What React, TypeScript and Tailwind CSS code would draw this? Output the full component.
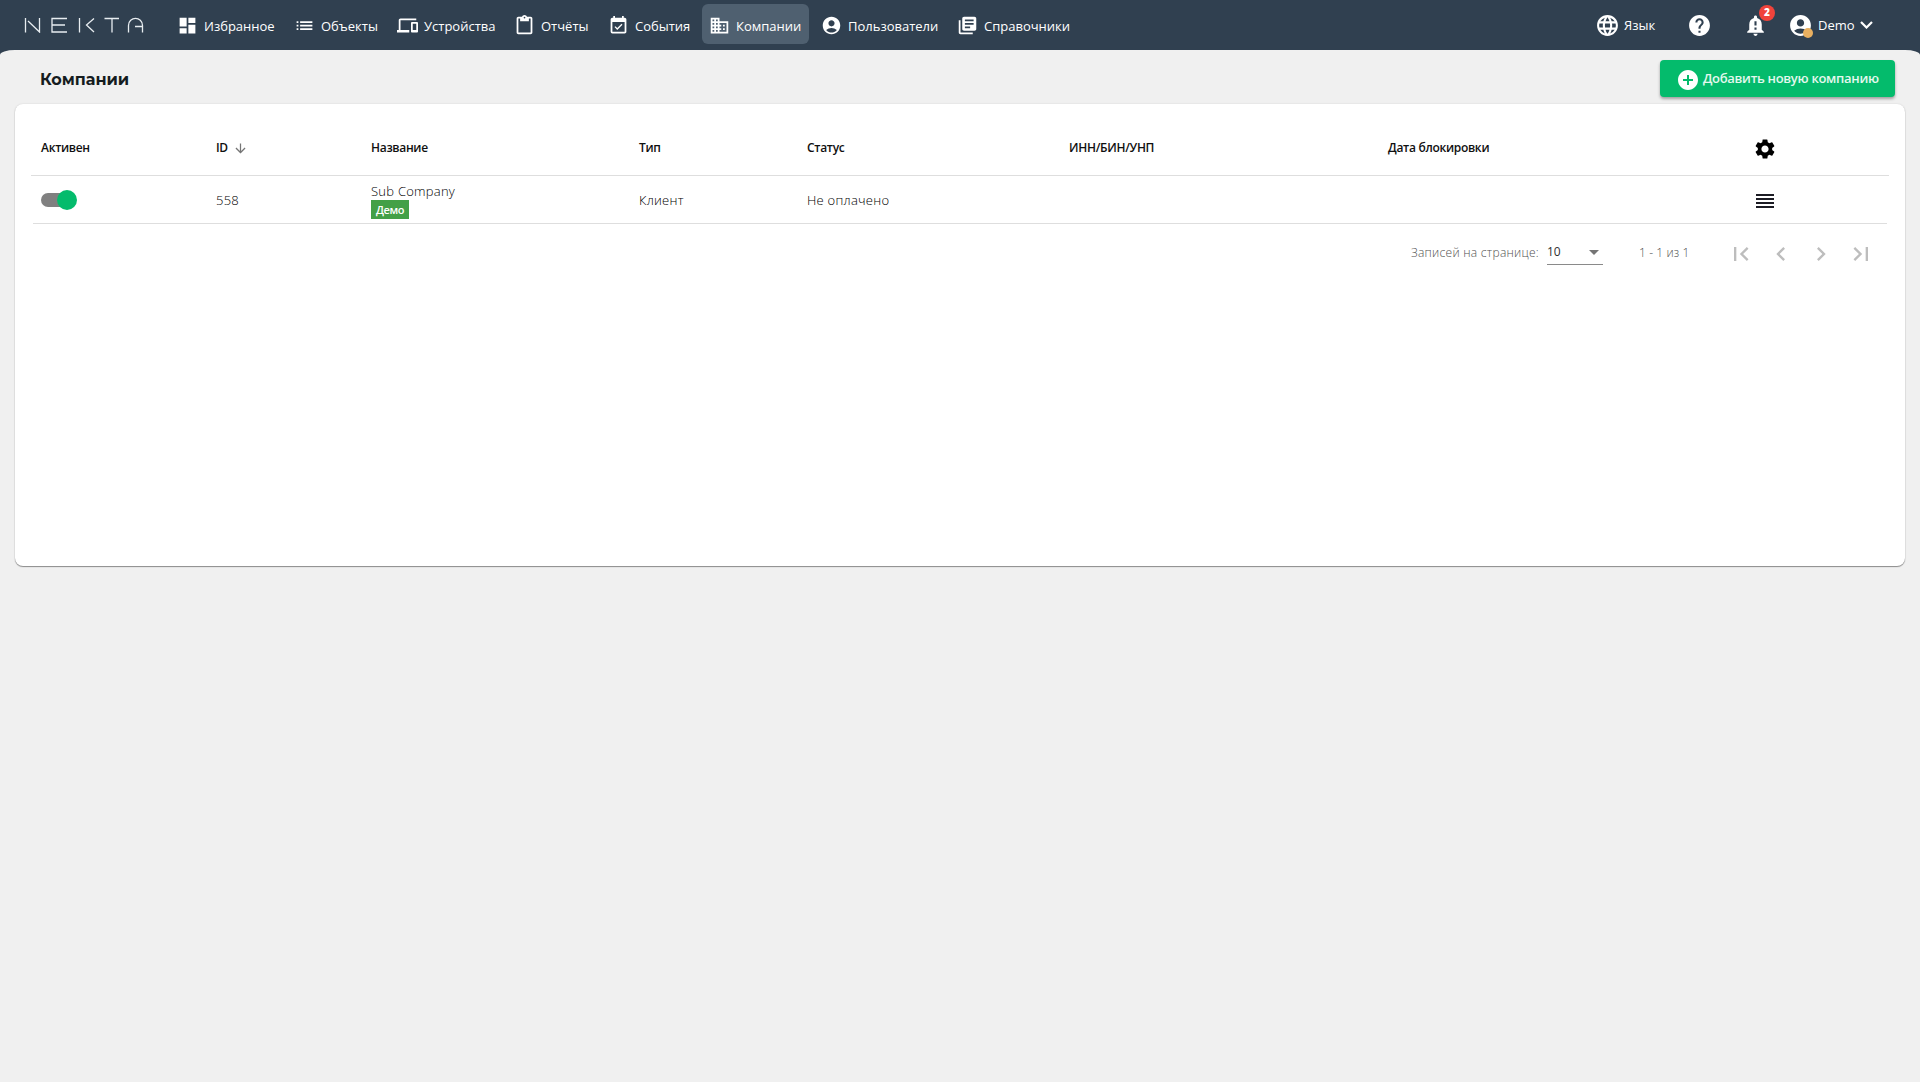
import React from 'react';
import type { IconType } from 'react-icons';
import {
  MdAccountCircle,
  MdAddCircle,
  MdArrowDownward,
  MdChevronLeft,
  MdChevronRight,
  MdContentPaste,
  MdDashboard,
  MdDevices,
  MdDomain,
  MdEventAvailable,
  MdFirstPage,
  MdHelp,
  MdLanguage,
  MdLastPage,
  MdLibraryBooks,
  MdList,
  MdNotificationImportant,
  MdReorder,
  MdSettings,
} from 'react-icons/md';

type NavItem = { label: string; icon: IconType; width: string; active?: boolean };

const navItems: NavItem[] = [
  { label: 'Избранное', icon: MdDashboard, width: 'w-[117px]' },
  { label: 'Объекты', icon: MdList, width: 'w-[103px]' },
  { label: 'Устройства', icon: MdDevices, width: 'w-[117px]' },
  { label: 'Отчёты', icon: MdContentPaste, width: 'w-[94px]' },
  { label: 'События', icon: MdEventAvailable, width: 'w-[101px]' },
  { label: 'Компании', icon: MdDomain, width: 'w-[112px]', active: true },
  { label: 'Пользователи', icon: MdAccountCircle, width: 'w-[136px]' },
  { label: 'Справочники', icon: MdLibraryBooks, width: 'w-[130px]' },
];

const columns = 'grid grid-cols-[175px_155px_268px_168px_262px_319px_365px_1fr] items-center';

const Logo = () => (
  <svg className="mt-[17px] ml-6 h-4 w-[120px]" viewBox="0 0 120 16" fill="none" stroke="#e8edf1" strokeWidth="1.3">
    <path d="M1.500 15.500V1M4 4L15.500 15V1" />
    <path d="M43 1.500H28V15H43M28 8H41" />
    <path d="M55.500 1V15.500M70 1.500L62.500 8L70 15" />
    <path d="M80.500 1.500H95M88 1.500V15.500" />
    <path d="M104.500 15.500V8.500C104.500 -1 118.500 -1 118.500 8.500V15.500M111 9.500H118.500" />
  </svg>
);

const Header = () => (
  <header className="flex h-[50px] text-[13px] text-white">
    <Logo />
    <nav className="ml-[26px] flex h-10 pt-1">
      {navItems.map(({ label, icon: Icon, width, active }) => (
        <div key={label} className={`${width} h-10 shrink-0 pr-[5px]`}>
          <a
            href="#"
            className={`flex h-10 items-center rounded-md pt-[3px] pl-[7px] whitespace-nowrap ${active ? 'bg-[#4f6070]' : ''}`}
          >
            <Icon className="mr-1.5 size-[21px] shrink-0" />
            <span className="pt-0.5">{label}</span>
          </a>
        </div>
      ))}
    </nav>

    {/* Language, help, alerts and profile */}
    <div className="mr-[47px] ml-auto flex items-center">
      <MdLanguage className="size-[25px]" />
      <span className="mt-px ml-1 w-[63px]">Язык</span>
      <MdHelp className="size-[25px]" />
      <div className="relative ml-[31px]">
        <MdNotificationImportant className="size-[25px]" />
        <span className="absolute -top-2 left-4 flex size-4 items-center justify-center rounded-full bg-[#f0433b] text-[10px] font-extrabold">
          2
        </span>
      </div>
      <div className="relative ml-5">
        <MdAccountCircle className="size-[25px]" />
        <span className="absolute top-[15px] left-[15px] size-2.5 rounded-full bg-[#e9b060]" />
      </div>
      <span className="mt-px ml-[5px] w-[42px]">Demo</span>
      <svg className="h-2 w-[13px]" viewBox="0 0 13 8" fill="none" stroke="currentColor" strokeWidth="2.2">
        <path d="M1 1L6.500 6.500L12 1" />
      </svg>
    </div>
  </header>
);

const CompaniesTable = () => (
  <section className="mx-[15px] mt-[7px] h-[462px] rounded-lg bg-white px-4 shadow-[0_1px_1px_#00000066,0_0_2px_#00000020]">
    <div
      className={`${columns} h-[72px] border-b border-[#dedede] pl-2.5 text-xs font-semibold tracking-[-0.3px] text-[#101010]`}
    >
      <span className="mt-4">Активен</span>
      <span className="mt-4 flex items-center gap-[5px]">
        ID
        <MdArrowDownward className="mt-0.5 size-[15px] text-[#757575]" />
      </span>
      <span className="mt-4">Название</span>
      <span className="mt-4">Тип</span>
      <span className="mt-4">Статус</span>
      <span className="mt-4">ИНН/БИН/УНП</span>
      <span className="mt-4">Дата блокировки</span>
      <MdSettings className="mt-[18px] size-6 text-black" />
    </div>

    <div
      className={`${columns} mx-0.5 h-12 border-b border-[#dedede] pl-2 text-[13px] font-light tracking-[0.25px] text-black`}
    >
      <div className="flex h-5 w-9 items-center justify-end">
        <div className="h-3.5 w-[26px] rounded-full bg-[#808080]" />
        <div className="-ml-[10px] size-5 shrink-0 rounded-full bg-[#04bb6c]" />
      </div>
      <span className="mt-0.5">558</span>
      <div className="mt-[3px] flex flex-col items-start">
        <span className="h-4 leading-[14px]">Sub Company</span>
        <span className="h-[19px] bg-[#43a047] px-[5px] text-[11px] leading-[20px] font-semibold tracking-[-0.4px] text-white">
          Демо
        </span>
      </div>
      <span className="mt-0.5">Клиент</span>
      <span className="mt-0.5">Не оплачено</span>
      <span />
      <span />
      <MdReorder className="mt-0.5 size-6 text-[#1c1c24]" />
    </div>

    {/* Paginator */}
    <div className="flex h-[57px] items-center text-xs font-light text-[#505050]">
      <span className="ml-auto w-[136px] tracking-[0.27px] whitespace-nowrap">Записей на странице:</span>
      <div className="mt-[3px] flex h-[22px] w-14 items-start justify-between border-b border-[#8a8a8a] pt-px pr-1">
        <span className="font-normal text-[#303030]">10</span>
        <span className="mt-1.5 border-x-[5px] border-t-[5px] border-x-transparent border-t-[#757575]" />
      </div>
      <span className="ml-9 w-[88px] tracking-[0.1px]">1 - 1 из 1</span>
      <div className="mt-[3px] mr-3.5 flex gap-3 text-[#bdbdbd]">
        <MdFirstPage className="size-7" />
        <MdChevronLeft className="size-7" />
        <MdChevronRight className="size-7" />
        <MdLastPage className="size-7" />
      </div>
    </div>
  </section>
);

const App: React.FC = () => (
  <div className="h-[1082px] w-[1920px] overflow-hidden bg-[#304050] font-['Open_Sans','Noto_Sans',sans-serif]">
    <Header />
    <main className="h-[1032px] bg-[#f0f0f0] [border-radius:15px_15px_0_0/5px_5px_0_0]">
      <div className="flex h-[47px] items-start justify-between pr-[25px] pl-10">
        <h1 className="mt-[18px] font-['Montserrat','Inter',sans-serif] text-[16px] leading-[24px] font-bold text-[#151c20]">
          Компании
        </h1>
        <button className="mt-2.5 flex h-[37px] w-[235px] items-center rounded bg-[#04bb6c] pl-4 text-[13px] font-semibold tracking-[-0.3px] whitespace-nowrap text-[#e4f8ee] shadow-[0_2px_3px_#00000055]">
          <MdAddCircle className="mt-0.5 mr-[3px] size-6 text-white" />
          Добавить новую компанию
        </button>
      </div>
      <CompaniesTable />
    </main>
  </div>
);

export default App;
